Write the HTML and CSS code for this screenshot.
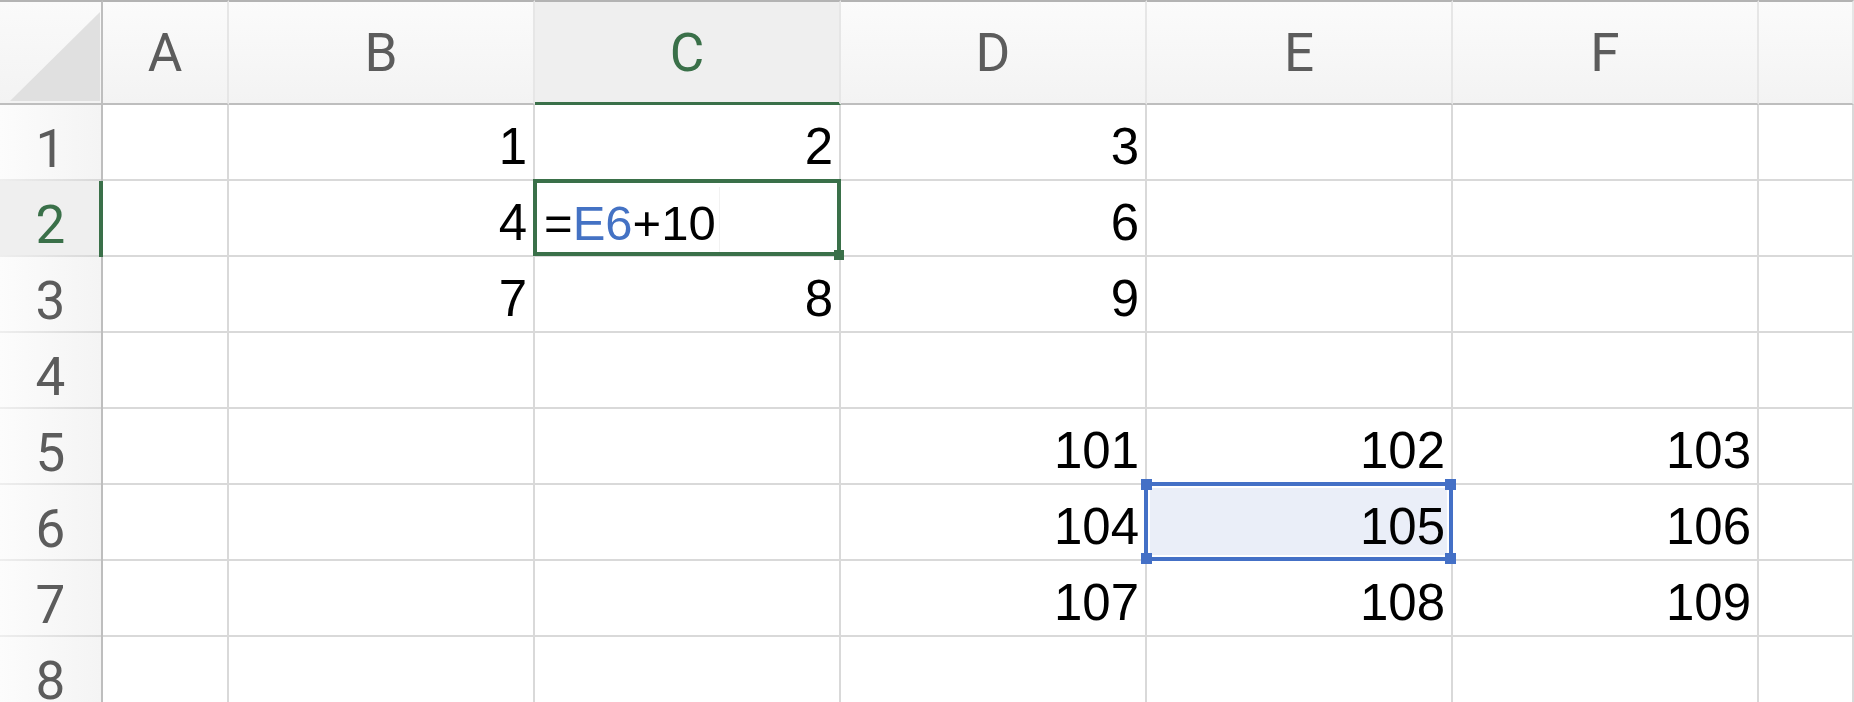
FILE: index.html
```html
<!DOCTYPE html>
<html>
<head>
<meta charset="utf-8">
<link rel="stylesheet" href="styles.css">
</head>
<body>
<div class="sheet">
  <div class="corner"><svg class="tri" width="90" height="89" viewBox="0 0 90 89"><polygon points="0,89 90,0 90,89" fill="#e0e0e0"/></svg></div>
  <div class="colhead">A</div>
  <div class="colhead">B</div>
  <div class="colhead sel">C</div>
  <div class="colhead">D</div>
  <div class="colhead">E</div>
  <div class="colhead">F</div>
  <div class="colhead"></div>

  <div class="rowhead">1</div>
  <div class="cell"></div>
  <div class="cell">1</div>
  <div class="cell">2</div>
  <div class="cell">3</div>
  <div class="cell"></div>
  <div class="cell"></div>
  <div class="cell"></div>

  <div class="rowhead sel">2</div>
  <div class="cell"></div>
  <div class="cell">4</div>
  <div class="cell editing"><span class="editor">=<span class="ref">E6</span>+10</span><span class="active-box"></span><span class="fill-handle"></span></div>
  <div class="cell">6</div>
  <div class="cell"></div>
  <div class="cell"></div>
  <div class="cell"></div>

  <div class="rowhead">3</div>
  <div class="cell"></div>
  <div class="cell">7</div>
  <div class="cell">8</div>
  <div class="cell">9</div>
  <div class="cell"></div>
  <div class="cell"></div>
  <div class="cell"></div>

  <div class="rowhead">4</div>
  <div class="cell"></div>
  <div class="cell"></div>
  <div class="cell"></div>
  <div class="cell"></div>
  <div class="cell"></div>
  <div class="cell"></div>
  <div class="cell"></div>

  <div class="rowhead">5</div>
  <div class="cell"></div>
  <div class="cell"></div>
  <div class="cell"></div>
  <div class="cell">101</div>
  <div class="cell">102</div>
  <div class="cell">103</div>
  <div class="cell"></div>

  <div class="rowhead">6</div>
  <div class="cell"></div>
  <div class="cell"></div>
  <div class="cell"></div>
  <div class="cell">104</div>
  <div class="cell referenced">105<span class="ref-box"></span><span class="h tl"></span><span class="h tr"></span><span class="h bl"></span><span class="h br"></span></div>
  <div class="cell">106</div>
  <div class="cell"></div>

  <div class="rowhead">7</div>
  <div class="cell"></div>
  <div class="cell"></div>
  <div class="cell"></div>
  <div class="cell">107</div>
  <div class="cell">108</div>
  <div class="cell">109</div>
  <div class="cell"></div>

  <div class="rowhead">8</div>
  <div class="cell"></div>
  <div class="cell"></div>
  <div class="cell"></div>
  <div class="cell"></div>
  <div class="cell"></div>
  <div class="cell"></div>
  <div class="cell"></div>
</div>
</body>
</html>
```
FILE: styles.css
```css
html, body {
  margin: 0;
  padding: 0;
  background: #ffffff;
  overflow: hidden;
}

.sheet {
  display: grid;
  grid-template-columns: 103px 126px repeat(5, 306px) 1fr;
  grid-template-rows: 105px repeat(8, 76px);
  width: 1854px;
  height: 702px;
  overflow: hidden;
}

.sheet > div {
  box-sizing: border-box;
}

.corner {
  border-top: 2px solid #b3b3b3;
  border-bottom: 2px solid #bebebe;
  border-right: 2px solid #bebebe;
  background: linear-gradient(#fafafa, #f3f3f3);
  display: flex;
  align-items: flex-end;
  justify-content: flex-end;
  padding: 0 1px 2px 0;
}

.tri {
  display: block;
}

.colhead {
  border-top: 2px solid #b3b3b3;
  border-bottom: 2px solid #bebebe;
  border-right: 2px solid #e6e6e6;
  background: linear-gradient(#fbfbfb, #f3f3f3);
  display: flex;
  align-items: center;
  justify-content: center;
  font: 53px/1 Roboto, "Liberation Sans", sans-serif;
  color: #5c5c5c;
  padding-top: 2px;
}

.colhead.sel {
  background: #efefef;
  color: #3a7049;
  border-bottom-color: #3a7049;
  box-shadow: inset 0 -1px 0 #3a7049;
}

.rowhead {
  border-right: 2px solid #bebebe;
  background:
    linear-gradient(to right, #eeeeee, #d8d8d8) bottom / 100% 2px no-repeat,
    linear-gradient(to right, #fcfcfc, #f4f4f4);
  display: flex;
  align-items: flex-end;
  justify-content: center;
  padding-bottom: 5px;
  font: 53px/1 Roboto, "Liberation Sans", sans-serif;
  color: #5c5c5c;
}

.rowhead.sel {
  background:
    linear-gradient(to right, #eeeeee, #d8d8d8) bottom / 100% 2px no-repeat,
    #efefef;
  color: #3a7049;
  border-right-color: #3a7049;
  box-shadow: inset -2px 0 0 #3a7049;
}

.cell {
  position: relative;
  border-right: 2px solid #d9d9d9;
  border-bottom: 2px solid #d9d9d9;
  display: flex;
  align-items: flex-end;
  justify-content: flex-end;
  padding: 0 6px 7px 0;
  font: 51px/1 "Liberation Sans", Arial, sans-serif;
  color: #000000;
}

.cell.editing,
.cell.referenced {
  z-index: 1;
}

.cell.editing {
  justify-content: flex-start;
  padding: 0 0 0 9px;
}

.editor {
  display: flex;
  align-items: flex-end;
  box-sizing: border-box;
  height: 68px;
  padding: 0 3px 7px 0;
  border-right: 1px solid #f2f2f2;
  font-size: 49px;
}

.ref {
  color: #4472c4;
}

.active-box {
  position: absolute;
  left: -2px;
  top: -2px;
  right: -2px;
  bottom: -1px;
  border: 4px solid #3a7049;
}

.fill-handle {
  position: absolute;
  right: -5px;
  bottom: -5px;
  width: 10px;
  height: 10px;
  background: #3a7049;
}

.cell.referenced {
  background: #eaeef8;
}

.ref-box {
  position: absolute;
  left: -3px;
  top: -3px;
  right: -2px;
  bottom: -2px;
  border: 4px solid #4470c6;
  box-shadow: inset 0 0 0 2px #ffffff;
}

.h {
  position: absolute;
  width: 11px;
  height: 11px;
  background: #4470c6;
}

.h.tl { left: -6px; top: -6px; }
.h.tr { right: -5px; top: -6px; }
.h.bl { left: -6px; bottom: -5px; }
.h.br { right: -5px; bottom: -5px; }
```
